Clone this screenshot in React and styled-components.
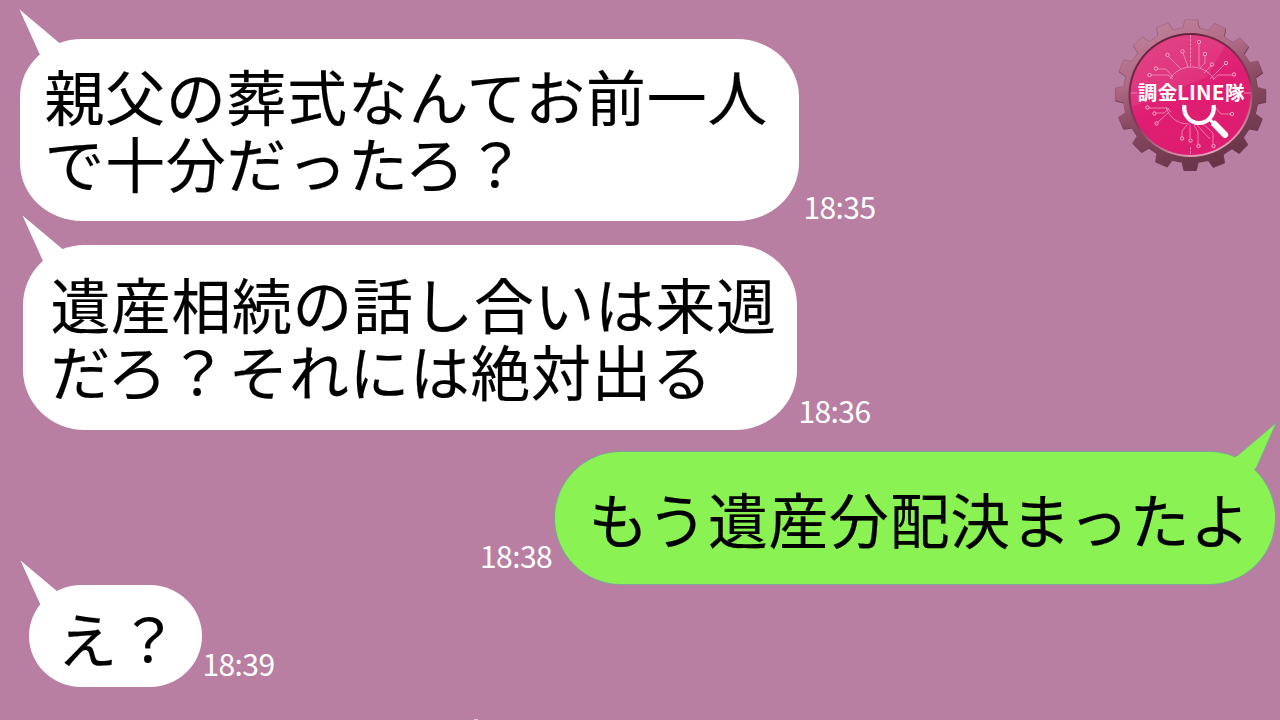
import styled, { createGlobalStyle } from 'styled-components';

const messages = [
    { id: 1, lines: ['親父の葬式なんてお前一人', 'で十分だったろ？'], time: '18:35', gap: 39, left: 20, width: 779, height: 182, radius: '62px / 58px', textX: 24.5, textY: 23, spacing: 0.9, tailX: -1, tailY: -30, timeX: 4.5, timeY: -1 },
    { id: 2, lines: ['遺産相続の話し合いは来週', 'だろ？それには絶対出る'], time: '18:36', gap: 24, left: 23, width: 774, height: 185, radius: '62px / 60px', textX: 27.5, textY: 24.5, spacing: 0.7, tailX: -1, tailY: -30, timeX: 1.5, timeY: 4 },
    { id: 3, mine: true, lines: ['もう遺産分配決まったよ'], time: '18:38', gap: 22, left: 5, width: 720, height: 132, radius: '66px', textX: 33.5, textY: 32.5, spacing: 0.8, tailX: -2, tailY: -30, timeX: 3, timeY: 13 },
    { id: 4, lines: ['え？'], time: '18:39', gap: 1, left: 28.5, width: 173.5, height: 102, radius: '52px / 51px', textX: 29, textY: 19, spacing: 1.4, tailX: -9, tailY: -25, timeX: 0.5, timeY: 8 },
];

const teeth = Array.from({ length: 16 }, (_, i) => i * 22.5 + 0.5);

const toothPoint = (deg, r) => {
    const a = (deg * Math.PI) / 180;
    return `${80.5 + r * Math.sin(a)} ${80 - r * Math.cos(a)}`;
};

const gearPath = `M${teeth.map((deg) => [
    toothPoint(deg - 7, 67.5),
    toothPoint(deg - 4.8, 75.5),
    toothPoint(deg + 4.8, 75.5),
    toothPoint(deg + 7, 67.5),
].join(' L')).join(' L')}Z`;

const ChannelLogo = () => (
    <LogoSvg viewBox="0 0 160 160">
        <defs>
            <linearGradient id="gear" gradientUnits="userSpaceOnUse" x1="50" y1="8" x2="105" y2="150">
                <stop offset="0" stopColor="#c0809a" />
                <stop offset="0.3" stopColor="#ae6984" />
                <stop offset="0.55" stopColor="#894a62" />
                <stop offset="1" stopColor="#683347" />
            </linearGradient>
            <linearGradient id="rim" x1="0.2" y1="0" x2="0.6" y2="1">
                <stop offset="0" stopColor="#5c2038" />
                <stop offset="0.6" stopColor="#8c3557" />
                <stop offset="1" stopColor="#e5a5b9" />
            </linearGradient>
            <linearGradient id="face" x1="0" y1="0" x2="0.5" y2="1">
                <stop offset="0" stopColor="#dc3c7e" />
                <stop offset="0.6" stopColor="#df1e73" />
                <stop offset="1" stopColor="#de1d70" />
            </linearGradient>
        </defs>
        <path d={gearPath} transform="translate(0.4 0.8)" fill="#57263a" opacity="0.8" />
        <path d={gearPath} fill="url(#gear)" stroke="#7d4058" strokeOpacity="0.5" strokeWidth="0.6" />
        <circle cx="80.5" cy="80" r="62" fill="url(#rim)" />
        <circle cx="80.5" cy="80" r="60" fill="url(#face)" />
        <path d="M80.5 20 A60 60 0 0 1 115 31 L97 62 L22 92 A60 60 0 0 1 80.5 20Z" fill="#ef7aa4" opacity="0.18" />
        <g fill="none" stroke="#f2a8c4" strokeWidth="0.7">
            <path d="M80.5 20 V51 M80.5 132 V141" strokeDasharray="3 1" />
            <path d="M21 78 H27 M134 78 H141" />
            <path d="M60 64 C69 48 94 48 104 64 M56 92 C59 102 67 109 79 109" />
            <path d="M40 60 H58 L63 64 M47 54 H56 L63 62 M58 41 L71 54 M73 38 L78 52 M89 29 V52 M95 40 V48 L90 53 M101 51 L94 58 M115 49 L100 64 M122 60 H108 L103 65" />
            <path d="M39 93 H57 L61 97 M46 98 H54 L59 93 M48 107 L59 97 M80 110 V123 M72 122 V116 L77 110 M88 129 V117 L84 110 M103 129 V118 L93 109 M120 99 H111 L105 92" />
            <path d="M86 109 L100 124" />
        </g>
        <g fill="#df2c77" stroke="#f6b7ce" strokeWidth="0.9">
            {[[39.5, 60], [46, 53.5], [57.5, 40], [72.5, 36.5], [89, 27], [95, 39], [102, 49.5], [116, 48], [124, 59.5], [37.5, 92.5], [44.5, 98.5], [46.5, 108.5], [72, 123.5], [80.5, 125.5], [88.5, 131], [103.5, 131], [122, 99]].map(([x, y]) => (
                <circle key={`${x}-${y}`} cx={x} cy={y} r="1.7" />
            ))}
        </g>
        <path d="M74.4 90 C73 100 80 108 89 108 C98 108 105 100 103.6 90" fill="none" stroke="#fff" strokeWidth="4.2" />
        <path d="M98.5 103 L104 109" stroke="#fff" strokeWidth="3" />
        <path d="M104.5 109 L115 119.8" stroke="#fff" strokeWidth="6.4" strokeLinecap="round" />
        <LogoText y="84.8">
            <tspan x="27.8" dy="0" textLength="39.4">調金</tspan>
            <tspan x="67" fontSize="20.5" textLength="47.5" lengthAdjust="spacingAndGlyphs">LINE</tspan>
            <tspan x="115">隊</tspan>
        </LogoText>
    </LogoSvg>
);

const App = () => {
    return (
        <Screen>
            <GlobalStyle />
            <Talk>
                {messages.map((message) => (
                    <MessageRow key={message.id} $mine={message.mine} $gap={message.gap} $left={message.left}>
                        <Bubble $mine={message.mine} $width={message.width} $height={message.height} $radius={message.radius} $textX={message.textX} $textY={message.textY}>
                            <Tail viewBox="0 0 60 60" $mine={message.mine} $x={message.tailX} $y={message.tailY}>
                                <path d="M0.5 0.5 L41 34.5 L46 60 L21 46Z" fill={message.mine ? '#8af253' : '#fff'} />
                                {message.mine && <path d="M21 47 L0.5 0.5 L40 34" fill="none" stroke="#7fa596" strokeWidth="1" />}
                            </Tail>
                            {message.lines.map((line) => (
                                <Line key={line} $spacing={message.spacing}>{line}</Line>
                            ))}
                        </Bubble>
                        <Time $x={message.timeX} $y={message.timeY}>{message.time}</Time>
                    </MessageRow>
                ))}
            </Talk>
            <NextTimeEdge />
            <ChannelLogo />
        </Screen>
    );
};

export default App;

const GlobalStyle = createGlobalStyle`
    body {
        margin: 0;
        overflow: hidden;
        background: #b87fa2;
    }
`;

const Screen = styled.main`
    position: relative;
    width: 1280px;
    height: 720px;
    overflow: hidden;
    background: #b87fa2;
    font-family: 'Noto Sans CJK JP', sans-serif;
`;

const Talk = styled.div`
    display: flex;
    flex-direction: column;
`;

const MessageRow = styled.div`
    display: flex;
    flex-direction: ${(props) => (props.$mine ? 'row-reverse' : 'row')};
    align-items: flex-end;
    margin-top: ${(props) => props.$gap}px;
    padding: ${(props) => (props.$mine ? `0 ${props.$left}px 0 0` : `0 0 0 ${props.$left}px`)};
`;

const Bubble = styled.div`
    position: relative;
    box-sizing: border-box;
    flex-shrink: 0;
    width: ${(props) => props.$width}px;
    height: ${(props) => props.$height}px;
    padding: ${(props) => props.$textY}px 0 0 ${(props) => props.$textX}px;
    border-radius: ${(props) => props.$radius};
    background: ${(props) => (props.$mine ? '#8af253' : '#fff')};
    box-shadow: ${(props) => (props.$mine ? '0 0 0 1px #7fa596' : 'none')};
`;

const Tail = styled.svg`
    position: absolute;
    top: ${(props) => props.$y}px;
    ${(props) => (props.$mine ? 'right' : 'left')}: ${(props) => props.$x}px;
    width: 60px;
    height: 60px;
    transform: ${(props) => (props.$mine ? 'scaleX(-1)' : 'none')};
`;

const Line = styled.div`
    position: relative;
    height: 67px;
    color: #000;
    font-size: 59.8px;
    font-weight: 400;
    line-height: 67px;
    letter-spacing: ${(props) => props.$spacing}px;
    white-space: nowrap;
    -webkit-text-stroke: 0.2px #000;
`;

const Time = styled.span`
    margin: ${(props) => `0 ${props.$x}px ${props.$y}px`};
    color: #fff;
    font-size: 30px;
    font-weight: 400;
    line-height: 32px;
    letter-spacing: -0.6px;
`;

// top of the next message's time, cut off by the screen edge
const NextTimeEdge = styled.div`
    position: absolute;
    bottom: 0;
    left: 474px;
    width: 4px;
    height: 1px;
    background: #e0c6d6;
`;

const LogoSvg = styled.svg`
    position: absolute;
    top: 15px;
    left: 1110px;
    width: 160px;
    height: 160px;
`;

const LogoText = styled.text`
    fill: #fff;
    font-family: 'Noto Sans CJK JP', sans-serif;
    font-size: 19.5px;
    font-weight: 700;
`;
